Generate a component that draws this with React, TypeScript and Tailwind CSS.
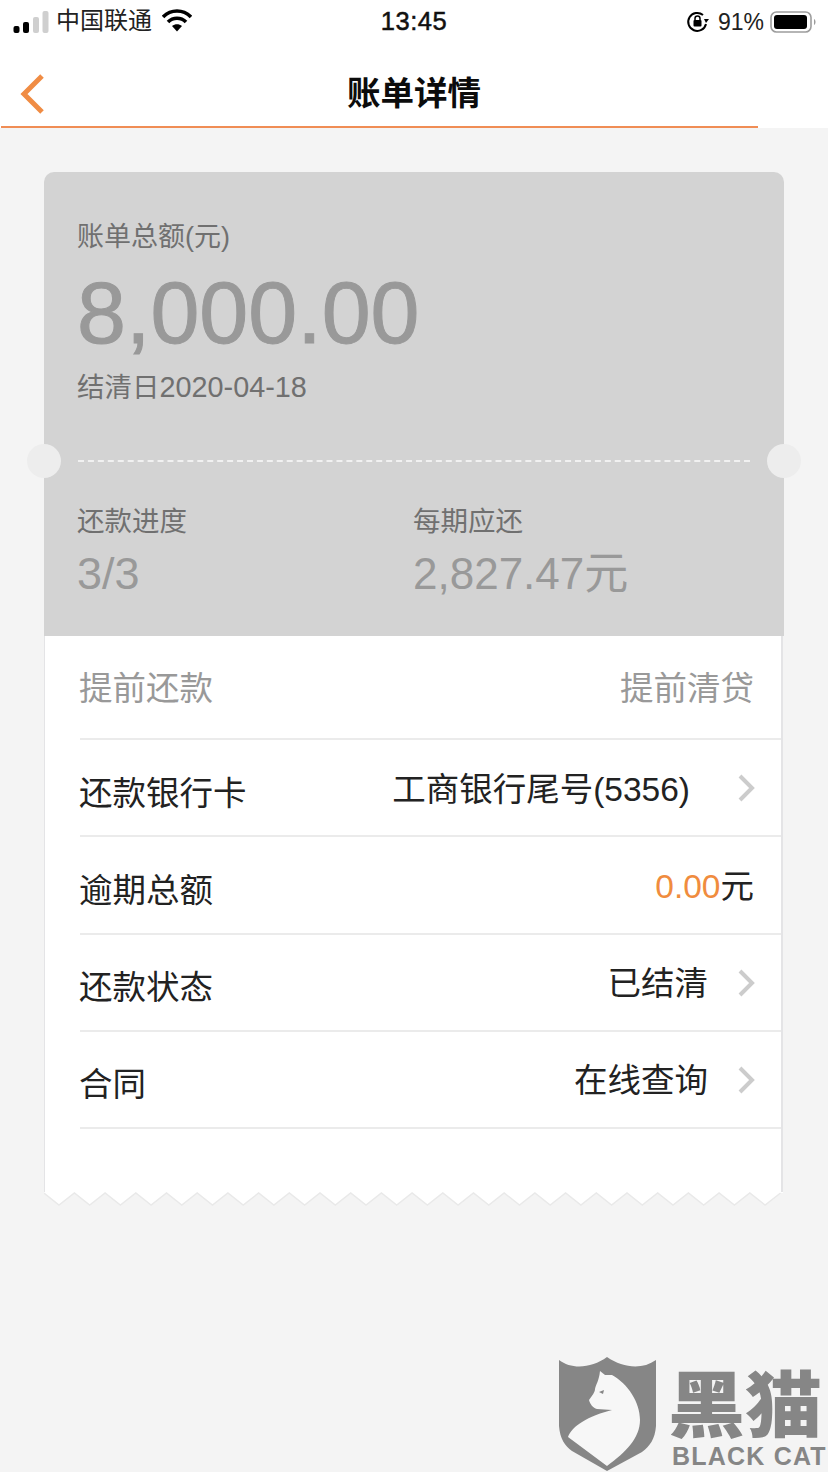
import { ReactNode } from 'react';

const FONT = '"Liberation Sans", "Noto Sans CJK SC", sans-serif';

function Chevron() {
  return (
    <svg width="18" height="30" viewBox="0 0 18 30" className="ml-[29px] mr-[-1px]">
      <path d="M3 3 L15 15 L3 27" fill="none" stroke="#cccccc" strokeWidth="4" />
    </svg>
  );
}

function SignalBars() {
  return (
    <svg width="36" height="24" viewBox="0 0 36 24" className="ml-[13px]">
      <rect x="0.5" y="16" width="6" height="7" rx="2" fill="#000" />
      <rect x="10" y="12" width="6" height="11" rx="2" fill="#000" />
      <rect x="20" y="7" width="6" height="16" rx="2" fill="#cfcfcf" />
      <rect x="29.5" y="1" width="6" height="22" rx="2" fill="#cfcfcf" />
    </svg>
  );
}

function Wifi() {
  return (
    <svg width="30" height="24" viewBox="0 0 30 24" className="ml-[10px] mt-[-3px]">
      <path d="M1 8 C9 0 21 0 29 8" fill="none" stroke="#000" strokeWidth="3.6" />
      <path d="M6 13 C11 8 19 8 24 13" fill="none" stroke="#000" strokeWidth="3.6" />
      <path d="M10 17 C13 14.5 17 14.5 20 17 L15 22.5 Z" fill="#000" />
    </svg>
  );
}

function RotationLock() {
  return (
    <svg width="24" height="24" viewBox="0 0 24 24">
      <path d="M20 14 A9 9 0 1 1 17 5" fill="none" stroke="#000" strokeWidth="2" />
      <path d="M18 9 L23 9 L20 13 Z" fill="#000" />
      <rect x="7.5" y="10" width="8" height="6.5" rx="1" fill="#000" />
      <path d="M9 10 V8.5 A2.5 2.5 0 0 1 14 8.5 V10" fill="none" stroke="#000" strokeWidth="1.5" />
    </svg>
  );
}

function Battery() {
  return (
    <svg width="48" height="24" viewBox="0 0 48 24" className="ml-[6px]">
      <rect x="1" y="2" width="40" height="20" rx="5.5" fill="none" stroke="#9d9d9d" strokeWidth="1.6" />
      <rect x="4" y="5" width="33" height="14" rx="3" fill="#000" />
      <path d="M44 9 C46 10 46 14 44 15 Z" fill="#9d9d9d" />
    </svg>
  );
}

function StatusBar() {
  return (
    <div className="h-[44px] bg-white flex items-center justify-between text-black relative">
      <div className="flex items-center w-[300px]">
        <SignalBars />
        <span className="ml-[7px] mt-[-2px] text-[24px] leading-[30px] text-[#222222]">中国联通</span>
        <Wifi />
      </div>
      <span className="mt-[-2px] text-[25.5px] leading-[30px] tracking-[0.5px] text-[#111111] [-webkit-text-stroke:0.5px_#111111]">
        13:45
      </span>
      <div className="flex items-center justify-end w-[300px] pr-[10px]">
        <RotationLock />
        <span className="ml-[8px] text-[23px] leading-[30px] text-[#222222]">91%</span>
        <Battery />
      </div>
    </div>
  );
}

function NavBar() {
  return (
    <div className="h-[84px] relative flex items-center justify-center bg-white">
      <svg width="30" height="44" viewBox="0 0 30 44" className="absolute left-[18px] top-[28px]">
        <path d="M24 4 L6 22 L24 40" fill="none" stroke="#f08c44" strokeWidth="5" />
      </svg>
      <span className="text-[33.5px] leading-[40px] font-bold text-[#0c0c0c] mt-[16px]">账单详情</span>
      <div className="absolute left-[1px] bottom-0 w-[757px] h-[2px] bg-[#f08d55]" />
    </div>
  );
}

function Notch({ side }: { side: 'left' | 'right' }) {
  return (
    <div
      className={`absolute top-[272px] w-[34px] h-[34px] rounded-full bg-[#ededed] ${
        side === 'left' ? 'left-[-17px]' : 'right-[-17px]'
      }`}
    />
  );
}

function BillSummary() {
  return (
    <div className="relative h-[464px] bg-[#d3d3d3] rounded-t-[10px] pl-[33px]">
      <div className="pt-[48px] text-[27px] leading-[34px] text-[#707070]">账单总额(元)</div>
      <div className="mt-[17px] text-[88px] leading-[84px] text-[#999999] [-webkit-text-stroke:1px_#999999]">
        8,000.00
      </div>
      <div className="mt-[15px] text-[27.5px] leading-[34px] text-[#707070]">
        结清日<span className="text-[28.8px]">2020-04-18</span>
      </div>
      <div className="absolute left-[34px] right-[34px] top-[288px] border-t-2 border-dashed border-[#f1f1f1]" />
      <Notch side="left" />
      <Notch side="right" />
      <div className="mt-[100px] flex">
        <div className="w-[336px]">
          <div className="text-[27.5px] leading-[34px] text-[#707070]">还款进度</div>
          <div className="mt-[11px] text-[45px] leading-[48px] text-[#999999]">3/3</div>
        </div>
        <div>
          <div className="text-[27.5px] leading-[34px] text-[#707070]">每期应还</div>
          <div className="mt-[11px] text-[44px] leading-[48px] text-[#999999]">2,827.47元</div>
        </div>
      </div>
    </div>
  );
}

function Row({ label, height, labelClass, children }: { label: string; height: string; labelClass: string; children: ReactNode }) {
  return (
    <div className={`${height} ml-[35px] flex items-center justify-between border-b-2 border-[#ebebeb] pr-[27px]`}>
      <span className={`text-[33.5px] leading-[40px] text-[#222222] ml-[-1px] ${labelClass}`}>{label}</span>
      <div className="flex items-center text-[33.5px] leading-[40px] text-[#222222]">{children}</div>
    </div>
  );
}

function ZigZag() {
  const teeth = Array.from({ length: 24 }, (_, i) => i);
  const d = teeth.map((i) => `L${15 + i * 30.7} 13 L${30.4 + i * 30.7} 1`).join(' ');
  return (
    <svg width="740" height="16" viewBox="0 0 740 16" className="block">
      <path d={`M0 0 L0 1 ${d} L739 1 L739 0 Z`} fill="#ffffff" />
      <path d={`M0 1 ${d}`} fill="none" stroke="#e9e9e9" strokeWidth="1.4" />
    </svg>
  );
}

function BillDetails() {
  return (
    <div>
      <div className="h-[556px] bg-white border-l border-r-2 border-[#e4e4e6] w-[739px]">
        <div className="h-[104px] ml-[35px] pt-[4px] flex items-center justify-between border-b-2 border-[#ebebeb] pr-[27px] text-[33.5px] text-[#999999]">
          <span className="ml-[-1px]">提前还款</span>
          <span>提前清贷</span>
        </div>
        <Row label="还款银行卡" height="h-[97px]" labelClass="mt-[12px]">
          <span className="mt-[4px] mr-[18px]">工商银行尾号(5356)</span>
          <Chevron />
        </Row>
        <Row label="逾期总额" height="h-[98px]" labelClass="mt-[12px]">
          <span className="mt-[4px] text-[#f08c3e]">0.00</span>
          <span className="mt-[4px]">元</span>
        </Row>
        <Row label="还款状态" height="h-[97px]" labelClass="mt-[10px]">
          <span className="mt-[2px]">已结清</span>
          <Chevron />
        </Row>
        <Row label="合同" height="h-[97px]" labelClass="mt-[10px]">
          <span className="mt-[2px]">在线查询</span>
          <Chevron />
        </Row>
      </div>
      <ZigZag />
    </div>
  );
}

function Watermark() {
  return (
    <div className="absolute left-[558px] top-[1356px] w-[270px] h-[116px] text-[#868686]">
      <svg width="100" height="116" viewBox="0 0 100 116" className="absolute left-0 top-0">
        <path
          d="M1 4 C14 14 34 12 49 1 C65 12 84 14 98 4 L98 70 C97 83 92 90 84 96 L49 115 L14 95 C7 90 2 83 1 70 Z"
          fill="#868686"
        />
        <path
          d="M42 15 L47 19 L54 19 C70 28 82 46 82 64 C82 82 68 96 49 110 L10 81 C14 70 30 60 54 54 L39 53 C35 52 32 48 31 44 C34 40 37 36 37 33 C38 28 41 25 42 15 Z"
          fill="#f7f7f7"
        />
        <path d="M41 36 L46 34 L45 38 Z" fill="#868686" />
      </svg>
      <div className="absolute left-[110px] top-[6px] text-[72px] leading-[76px] font-black font-['Noto_Sans_CJK_SC'] scale-x-[1.07] origin-left whitespace-nowrap">
        黑猫
      </div>
      <div className="absolute left-[114px] top-[86px] text-[25px] leading-[28px] font-bold tracking-[1.2px] whitespace-nowrap">
        BLACK CAT
      </div>
    </div>
  );
}

export default function App() {
  return (
    <div className="relative w-[828px] h-[1472px] overflow-hidden bg-[#f4f4f4]" style={{ fontFamily: FONT }}>
      <StatusBar />
      <NavBar />
      <div className="px-[44px] pt-[44px]">
        <BillSummary />
        <BillDetails />
      </div>
      <Watermark />
    </div>
  );
}
